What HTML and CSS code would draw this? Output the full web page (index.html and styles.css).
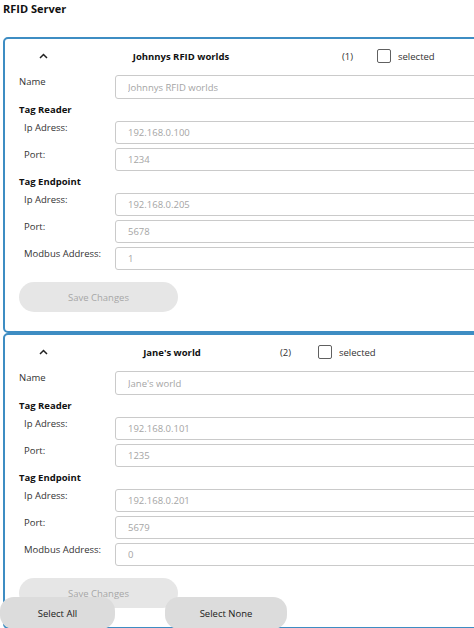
FILE: index.html
```html
<!DOCTYPE html>
<html lang="en">
<head>
<meta charset="utf-8">
<title>RFID Server</title>
<link rel="stylesheet" href="styles.css">
</head>
<body>
<div class="page">
  <h1 class="page-title">RFID Server</h1>

  <section class="card">
    <div class="hdr hdr-a">
      <span class="chev"><svg width="9" height="6" viewBox="0 0 9 6"><polyline points="1,5 4.5,1.5 8,5" fill="none" stroke="#222" stroke-width="1.5"/></svg></span>
      <span class="hdr-title">Johnnys RFID worlds</span>
      <span class="hdr-count">(1)</span>
      <label class="sel"><span class="box"></span><span>selected</span></label>
    </div>
    <div class="form">
      <div class="lbl">Name</div>
      <input class="field" value="Johnnys RFID worlds" readonly>
      <div class="sect">Tag Reader</div>
      <div class="lbl sub">Ip Adress:</div>
      <input class="field" value="192.168.0.100" readonly>
      <div class="lbl sub">Port:</div>
      <input class="field" value="1234" readonly>
      <div class="sect">Tag Endpoint</div>
      <div class="lbl sub">Ip Adress:</div>
      <input class="field" value="192.168.0.205" readonly>
      <div class="lbl sub">Port:</div>
      <input class="field" value="5678" readonly>
      <div class="lbl sub">Modbus Address:</div>
      <input class="field" value="1" readonly>
    </div>
    <button class="save" disabled>Save Changes</button>
  </section>

  <section class="card">
    <div class="hdr hdr-b">
      <span class="chev"><svg width="9" height="6" viewBox="0 0 9 6"><polyline points="1,5 4.5,1.5 8,5" fill="none" stroke="#222" stroke-width="1.5"/></svg></span>
      <span class="hdr-title">Jane's world</span>
      <span class="hdr-count">(2)</span>
      <label class="sel"><span class="box"></span><span>selected</span></label>
    </div>
    <div class="form">
      <div class="lbl">Name</div>
      <input class="field" value="Jane's world" readonly>
      <div class="sect">Tag Reader</div>
      <div class="lbl sub">Ip Adress:</div>
      <input class="field" value="192.168.0.101" readonly>
      <div class="lbl sub">Port:</div>
      <input class="field" value="1235" readonly>
      <div class="sect">Tag Endpoint</div>
      <div class="lbl sub">Ip Adress:</div>
      <input class="field" value="192.168.0.201" readonly>
      <div class="lbl sub">Port:</div>
      <input class="field" value="5679" readonly>
      <div class="lbl sub">Modbus Address:</div>
      <input class="field" value="0" readonly>
    </div>
    <button class="save" disabled>Save Changes</button>
  </section>
</div>

<div class="footer">
  <button class="fbtn fbtn-all">Select All</button>
  <button class="fbtn fbtn-none">Select None</button>
</div>
</body>
</html>
```

FILE: styles.css
```css
html, body {
  margin: 0;
  padding: 0;
  width: 474px;
  height: 628px;
  overflow: hidden;
  background: #ffffff;
  font-family: "Open Sans", "Noto Sans", sans-serif;
  font-size: 9.5px;
  color: #222;
}

.page {
  width: 474px;
  overflow: hidden;
}

.page-title {
  margin: 0;
  padding-left: 3px;
  height: 18px;
  line-height: 18px;
  font-size: 11px;
  font-weight: 700;
  color: #111;
}

.card {
  margin-top: 19px;
  margin-left: 3px;
  width: 560px;
  border: 2px solid #3e8dc3;
  border-radius: 5px;
  padding: 0 0 19px 0;
  box-sizing: border-box;
}

.card + .card {
  margin-top: 0;
}

.hdr {
  display: grid;
  height: 36px;
  padding-bottom: 2px;
  box-sizing: border-box;
  align-items: center;
}

.hdr-a {
  grid-template-columns: 76px 200px 96px auto;
}

.hdr-b {
  grid-template-columns: 76px 182px 55px auto;
}

.hdr-b .hdr-count {
  padding-right: 27px;
}

.chev {
  display: flex;
  justify-content: center;
  align-items: center;
}

.chev svg {
  display: block;
}

.hdr-title {
  text-align: center;
  font-weight: 700;
  color: #111;
}

.hdr-count {
  text-align: right;
  padding-right: 24px;
  color: #333;
}

.sel {
  display: flex;
  align-items: center;
  gap: 7px;
  color: #333;
}

.box {
  width: 14px;
  height: 14px;
  box-sizing: border-box;
  border: 1.5px solid #606060;
  border-radius: 2px;
}

.form {
  display: grid;
  grid-template-columns: 96px 1fr;
  padding-left: 14px;
  row-gap: 4px;
}

.lbl {
  line-height: 14px;
  color: #333;
}

.lbl.sub {
  padding-left: 5px;
}

.sect {
  grid-column: 1 / -1;
  height: 22px;
  line-height: 22px;
  font-weight: 700;
  color: #111;
  margin: -4px 0;
}

.field {
  height: 23px;
  box-sizing: border-box;
  border: 1px solid #cacaca;
  border-radius: 3px;
  padding: 0 0 0 12px;
  margin: 0;
  font-family: inherit;
  font-size: 9.5px;
  color: #a5a5a5;
  background: #fff;
  outline: none;
}

.form > .field:first-of-type {
  height: 24px;
}

.save {
  display: block;
  margin: 12px 0 0 14px;
  width: 159px;
  height: 30px;
  border: none;
  border-radius: 15px;
  background: #e6e6e6;
  color: #a6a6a6;
  font-family: inherit;
  font-size: 9.5px;
}

.footer {
  position: fixed;
  left: 0;
  bottom: -1px;
  display: flex;
  gap: 50px;
}

.fbtn {
  height: 32px;
  border: none;
  border-radius: 14px;
  background: #dcdcdc;
  color: #1a1a1a;
  font-family: inherit;
  font-size: 9.5px;
  padding: 0;
}

.fbtn-all {
  width: 115px;
}

.fbtn-none {
  width: 122px;
}
```
